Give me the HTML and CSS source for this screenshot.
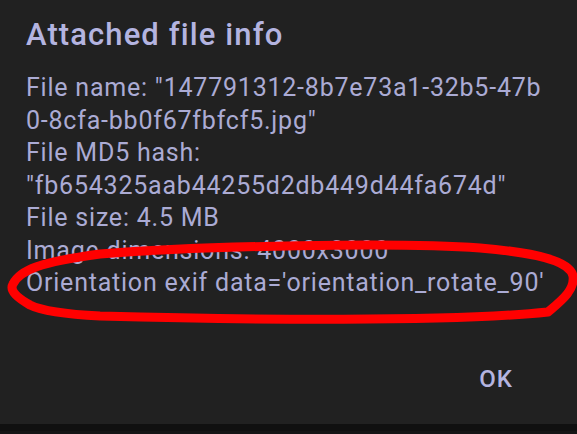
FILE: index.html
```html
<!DOCTYPE html>
<html>
<head>
<meta charset="utf-8">
<link rel="stylesheet" href="styles.css">
</head>
<body>
<div class="screen">
  <div class="dialog">
    <h1 class="title">Attached file info</h1>
    <div class="message">
      <span class="line">File name: "147791312-8b7e73a1-32b5-47b</span>
      <span class="line">0-8cfa-bb0f67fbfcf5.jpg"</span>
      <span class="line">File MD5 hash:</span>
      <span class="line">"fb654325aab44255d2db449d44fa674d"</span>
      <span class="line">File size: 4.5 MB</span>
      <span class="line">Image dimensions: 4000x3000</span>
      <span class="line">Orientation exif data='orientation_rotate_90'</span>
    </div>
    <div class="actions">
      <button class="btn">OK</button>
    </div>
  </div>
  <div class="navbar"></div>
  <svg class="annotation" width="577" height="434" viewBox="0 0 577 434">
    <path d="M 13 284 C 20 270, 40 262, 100 254 C 200 246, 400 242, 480 248 C 540 253, 570 262, 573 276 C 575 290, 562 300, 548 312 C 450 322, 250 320, 100 316 C 60 314, 40 310, 30 305 C 18 298, 9 291, 13 284 Z" fill="none" stroke="#ff0000" stroke-width="9" stroke-linejoin="round" stroke-linecap="round"/>
  </svg>
</div>
</body>
</html>
```
FILE: styles.css
```css
html, body {
  margin: 0;
  padding: 0;
  background: #212121;
}
.screen {
  position: relative;
  width: 577px;
  height: 434px;
  overflow: hidden;
  display: flex;
  flex-direction: column;
  font-family: Roboto, "Noto Sans", sans-serif;
}
.dialog {
  flex: 1;
  background: #212121;
  padding: 17px 0 0 26px;
  display: flex;
  flex-direction: column;
}
.title {
  margin: 0;
  font-size: 31px;
  line-height: 36px;
  font-weight: 500;
  letter-spacing: 1.1px;
  color: #b4b4e0;
}
.message {
  margin-top: 19px;
  display: flex;
  flex-direction: column;
  font-size: 25px;
  line-height: 32.5px;
  letter-spacing: 0.78px;
  color: #ababd4;
  white-space: nowrap;
}
.actions {
  margin-top: 65px;
  display: flex;
  justify-content: flex-end;
  padding-right: 64px;
}
.btn {
  background: none;
  border: none;
  padding: 0;
  font-family: Roboto, "Noto Sans", sans-serif;
  font-size: 24px;
  line-height: 28px;
  font-weight: 500;
  letter-spacing: 1px;
  color: #b4b4e0;
}
.navbar {
  height: 10px;
  background: #101010;
  border-bottom: 3px solid #151515;
  box-sizing: border-box;
}
.annotation {
  position: absolute;
  left: 0;
  top: 0;
  pointer-events: none;
}
```
